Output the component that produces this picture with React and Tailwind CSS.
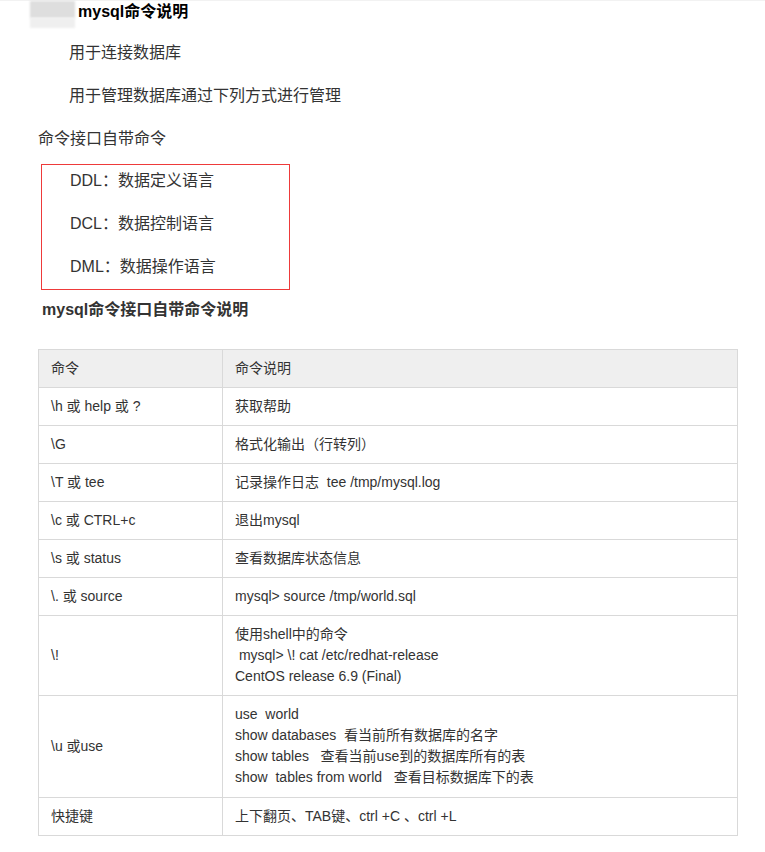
const font = {
  fontFamily: '"Liberation Sans", "Noto Sans CJK SC", sans-serif',
};

const rows = [
  ["\\h 或 help 或 ?", ["获取帮助"]],
  ["\\G", ["格式化输出（行转列）"]],
  ["\\T 或 tee", ["记录操作日志  tee /tmp/mysql.log"]],
  ["\\c 或 CTRL+c", ["退出mysql"]],
  ["\\s 或 status", ["查看数据库状态信息"]],
  ["\\. 或 source", ["mysql> source /tmp/world.sql"]],
  [
    "\\!",
    [
      "使用shell中的命令",
      " mysql> \\! cat /etc/redhat-release",
      "CentOS release 6.9 (Final)",
    ],
  ],
  [
    "\\u 或use",
    [
      "use  world",
      "show databases  看当前所有数据库的名字",
      "show tables   查看当前use到的数据库所有的表",
      "show  tables from world   查看目标数据库下的表",
    ],
  ],
  ["快捷键", ["上下翻页、TAB键、ctrl +C 、ctrl +L"]],
];

const ListItem = ({ children }) => (
  <p className="h-[24px] text-[16px] leading-[24px] text-[#333]">{children}</p>
);

export default function App() {
  return (
    <div
      className="min-h-[852px] w-[765px] border-t border-[#f2f2f2] bg-white"
      style={font}
    >
      <div className="flex h-[28px] items-start">
        <div className="ml-[30px] flex w-[45px] flex-col">
          <div className="h-[17px] bg-[#dedede] blur-[1px]" />
          <div className="h-[10px] bg-[#efefef] blur-[1px]" />
        </div>
        <h1 className="ml-[3px] mt-[1px] text-[16px] font-bold leading-[20px] text-black">
          mysql命令说明
        </h1>
      </div>

      <p className="ml-[69px] mt-[12px] text-[16px] leading-[24px] text-[#333]">
        用于连接数据库
      </p>
      <p className="ml-[69px] mt-[19px] text-[16px] leading-[24px] text-[#333]">
        用于管理数据库通过下列方式进行管理
      </p>
      <p className="ml-[38px] mt-[19px] text-[16px] leading-[24px] text-[#333]">
        命令接口自带命令
      </p>

      <div className="ml-[41px] mt-[13px] flex h-[126px] w-[249px] flex-col gap-[19px] border border-[#ee3a3a] pl-[28px] pt-[4px]">
        <ListItem>DDL：数据定义语言</ListItem>
        <ListItem>DCL：数据控制语言</ListItem>
        <ListItem>DML：数据操作语言</ListItem>
      </div>

      <h2 className="ml-[42px] mt-[10px] text-[16px] font-bold leading-[20px] text-[#333]">
        mysql命令接口自带命令说明
      </h2>

      <table className="ml-[38px] mt-[29px] w-[700px] border-collapse text-[14px] leading-[21px] text-[#333]">
        <thead>
          <tr className="bg-[#efefef]">
            <th className="h-[38px] w-[184px] border border-[#d9d9d9] px-3 text-left font-normal">
              命令
            </th>
            <th className="h-[38px] border border-[#d9d9d9] px-3 text-left font-normal">
              命令说明
            </th>
          </tr>
        </thead>
        <tbody>
          {rows.map(([cmd, lines]) => (
            <tr key={cmd}>
              <td className="border border-[#d9d9d9] px-3 py-[8px] align-middle">
                {cmd}
              </td>
              <td
                className={
                  lines.length > 3
                    ? "border border-[#d9d9d9] px-3 pb-[9px] pt-[8px] align-middle"
                    : "border border-[#d9d9d9] px-3 py-[8px] align-middle"
                }
              >
                {lines.map((line) => (
                  <div key={line} className="whitespace-pre">
                    {line}
                  </div>
                ))}
              </td>
            </tr>
          ))}
        </tbody>
      </table>
    </div>
  );
}
